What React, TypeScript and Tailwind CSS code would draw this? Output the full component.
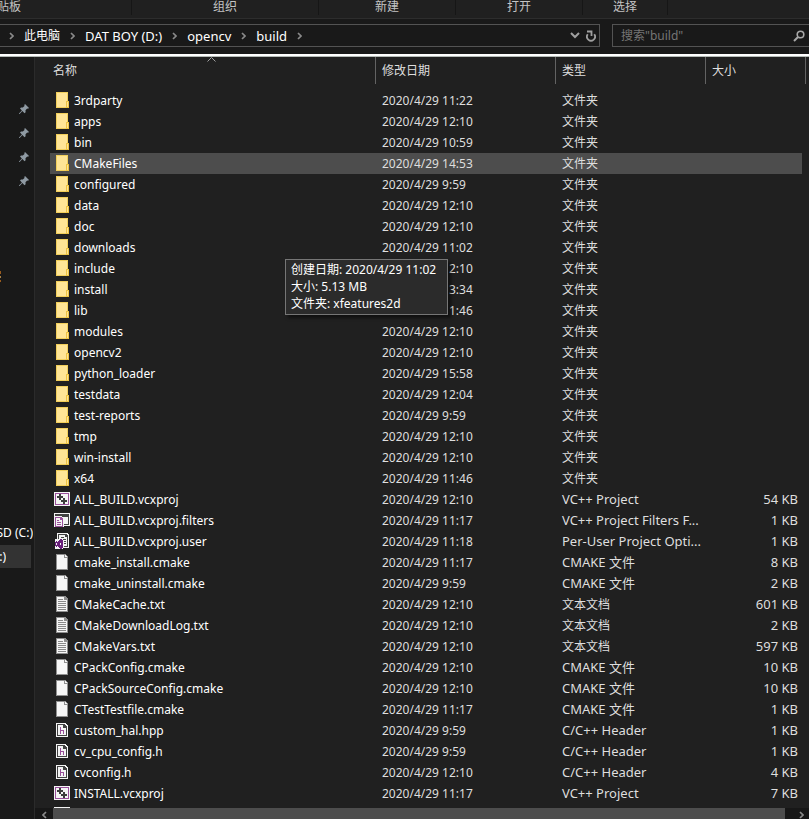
import type { ReactNode } from "react";

type IconKind = "folder" | "project" | "filters" | "user" | "blank" | "text" | "header";
type Row = { name: string; date: string; type: string; size?: string; icon: IconKind };

const folder = (name: string, time: string): Row => ({ name, date: `2020/4/29 ${time}`, type: "文件夹", icon: "folder" });
const file = (name: string, time: string, type: string, size: string, icon: IconKind): Row => ({
  name,
  date: `2020/4/29 ${time}`,
  type,
  size,
  icon,
});

const rows: Row[] = [
  folder("3rdparty", "11:22"),
  folder("apps", "12:10"),
  folder("bin", "10:59"),
  folder("CMakeFiles", "14:53"),
  folder("configured", "9:59"),
  folder("data", "12:10"),
  folder("doc", "12:10"),
  folder("downloads", "11:02"),
  folder("include", "12:10"),
  folder("install", "13:34"),
  folder("lib", "11:46"),
  folder("modules", "12:10"),
  folder("opencv2", "12:10"),
  folder("python_loader", "15:58"),
  folder("testdata", "12:04"),
  folder("test-reports", "9:59"),
  folder("tmp", "12:10"),
  folder("win-install", "12:10"),
  folder("x64", "11:46"),
  file("ALL_BUILD.vcxproj", "12:10", "VC++ Project", "54 KB", "project"),
  file("ALL_BUILD.vcxproj.filters", "11:17", "VC++ Project Filters F...", "1 KB", "filters"),
  file("ALL_BUILD.vcxproj.user", "11:18", "Per-User Project Opti...", "1 KB", "user"),
  file("cmake_install.cmake", "11:17", "CMAKE 文件", "8 KB", "blank"),
  file("cmake_uninstall.cmake", "9:59", "CMAKE 文件", "2 KB", "blank"),
  file("CMakeCache.txt", "12:10", "文本文档", "601 KB", "text"),
  file("CMakeDownloadLog.txt", "12:10", "文本文档", "2 KB", "text"),
  file("CMakeVars.txt", "12:10", "文本文档", "597 KB", "text"),
  file("CPackConfig.cmake", "12:10", "CMAKE 文件", "10 KB", "blank"),
  file("CPackSourceConfig.cmake", "12:10", "CMAKE 文件", "10 KB", "blank"),
  file("CTestTestfile.cmake", "11:17", "CMAKE 文件", "1 KB", "blank"),
  file("custom_hal.hpp", "9:59", "C/C++ Header", "1 KB", "header"),
  file("cv_cpu_config.h", "9:59", "C/C++ Header", "1 KB", "header"),
  file("cvconfig.h", "12:10", "C/C++ Header", "4 KB", "header"),
  file("INSTALL.vcxproj", "11:17", "VC++ Project", "7 KB", "project"),
];

const shapes: Record<IconKind, ReactNode> = {
  folder: (
    <>
      <path d="M2 0h12v16H2z" fill="#f2cf5b" />
      <path d="M3 1h10v14H3z" fill="#ffe596" />
      <path d="M12 9h3v7h-3z" fill="#edc343" />
      <path d="M13 10h1v5h-1z" fill="#ffe596" />
    </>
  ),
  project: (
    <>
      <path d="M0 1h16v14H0z" fill="#f4f4f4" />
      <path d="M1 2h14v12H1z" fill="#98509a" />
      <path d="M2 3h12v10H2z" fill="#f4f4f4" />
      <path d="M5 3h2v2h2v2H7v2H5V7H3V5h2zM9 7h2v2h2v2h-2v2H9v-2H7V9h2z" fill="#3c3c3c" />
    </>
  ),
  filters: (
    <>
      <path d="M0 1h16v13H0z" fill="#f4f4f4" />
      <path d="M1 2h14v11H1z" fill="#424242" />
      <path d="M2 5h12v7H2z" fill="#f4f4f4" />
      <path d="M0 4h8l2 3v8H0z" fill="#f4f4f4" />
      <path d="M1 5h6l2 2v8H1z" fill="#98509a" />
      <path d="M2 6h4v2h2v6H2z" fill="#f4f4f4" />
      <path d="M3 8h2v1H3zM3 10h4v1H3zM3 12h4v1H3z" fill="#98509a" />
    </>
  ),
  user: (
    <>
      <path d="M3 0h10l2 2v13H3z" fill="#f4f4f4" />
      <path d="M4 1h8l2 2v11H4z" fill="#424242" />
      <path d="M5 2h6v2h2v9H5z" fill="#f4f4f4" />
      <path d="M7 4h3v1H7zM7 6h1v1H7zM9 6h3v1H9zM7 8h1v1H7zM9 8h3v1H9zM9 10h3v1H9z" fill="#424242" />
      <path d="M1 6h7l2 1v8l-2 1H1z" fill="#f4f4f4" />
      <path d="M6 6l3 1v8l-3 1-3-3-1 1-1-1V9l1-1 1 1zM7 9l-2 2 2 2zM2 10v2l1-1z" fill="#68217a" fillRule="evenodd" />
    </>
  ),
  blank: (
    <>
      <path d="M2 0h9l3 3v13H2z" fill="#8f8f8f" />
      <path d="M3 1h7v3h3v11H3z" fill="#f6f6f6" />
      <path d="M11 1l2 2h-2z" fill="#f6f6f6" />
    </>
  ),
  text: (
    <>
      <path d="M2 0h9l3 3v13H2z" fill="#8f8f8f" />
      <path d="M3 1h7v3h3v11H3z" fill="#f6f6f6" />
      <path d="M4 3h5v1H4zM4 5h8v1H4zM4 7h8v1H4zM4 9h8v1H4zM4 11h8v1H4zM4 13h8v1H4z" fill="#8a8a8a" />
    </>
  ),
  header: (
    <>
      <path d="M2 1h9l3 3v11H2z" fill="#f4f4f4" />
      <path d="M3 2h7l3 3v9H3z" fill="#424242" />
      <path d="M4 3h5v3h3v7H4z" fill="#f4f4f4" />
      <path d="M6 5h1v3h3v4H9V9H7v3H6z" fill="#98509a" />
    </>
  ),
};

function FileIcon({ kind }: { kind: IconKind }) {
  return (
    <svg className="block size-4 shrink-0" viewBox="0 0 16 16" shapeRendering="crispEdges" aria-hidden="true">
      {shapes[kind]}
    </svg>
  );
}

function Pin() {
  return (
    <svg className="block size-[10px]" viewBox="0 0 10 10" aria-hidden="true">
      <path d="M6 0l4 4-1 .8-.8-.2-1.700 1.700.1 1.900-1.100 1L3.400 7.100.6 10H0v-.6l2.900-2.800L1 4.600l1-1.100 1.800.1 1.700-1.700L5.300 1z" fill="#8f9aa3" />
    </svg>
  );
}

function Chevron({ className }: { className: string }) {
  return (
    <svg className={className} viewBox="0 0 5 8" fill="none" stroke="currentColor" strokeWidth="1.700" aria-hidden="true">
      <path d="M1 1l3 3-3 3" />
    </svg>
  );
}

const crumbs = [
  { label: "此电脑", size: "text-[12px]" },
  { label: "DAT BOY (D:)", size: "text-[13px]" },
  { label: "opencv", size: "text-[13px]" },
  { label: "build", size: "text-[13px]" },
];

const isLatin = (s: string) => /^[A-Z]/.test(s);

export default function App() {
  return (
    <div className="flex h-screen flex-col overflow-hidden bg-[#191919] font-['Noto_Sans','Noto_Sans_CJK_SC',sans-serif] text-xs text-white">
      <div className="flex h-[19px] shrink-0 border-b border-[#2d2d2d] bg-[#202020] leading-[14px] text-[#c4c4c4]">
        <div className="flex h-[15px] w-[132px] border-r border-[#161616]">
          <span className="flex w-[21px] justify-end overflow-hidden whitespace-nowrap">剪贴板</span>
        </div>
        <div className="h-[15px] w-[187px] border-r border-[#161616] text-center">组织</div>
        <div className="h-[15px] w-[137px] border-r border-[#161616] text-center">新建</div>
        <div className="h-[15px] w-[127px] border-r border-[#161616] text-center">打开</div>
        <div className="h-[15px] w-[85px] border-r border-[#161616] text-center">选择</div>
      </div>

      <div className="flex h-[35px] shrink-0 items-center gap-3 pb-0.5">
        <nav className="flex h-[23px] flex-1 items-center border border-l-0 border-[#535353]" aria-label="地址">
          <Chevron className="ml-[9px] h-2 w-[5px] text-[#8a8a8a]" />
          {crumbs.map((c) => (
            <div key={c.label} className="flex items-center">
              <a href="#" className={`px-[10px] leading-4 ${c.size}`}>{c.label}</a>
              <Chevron className="h-2 w-[5px] text-[#8a8a8a]" />
            </div>
          ))}
          <button type="button" className="ml-auto flex h-full w-4 items-center justify-center" aria-label="以前的位置">
            <svg className="h-[7px] w-[10px]" viewBox="0 0 10 7" fill="none" stroke="#a0a0a0" strokeWidth="2" aria-hidden="true">
              <path d="M1 1l4 4 4-4" />
            </svg>
          </button>
          <button type="button" className="flex h-full w-4 items-center justify-center" aria-label="刷新">
            <svg className="h-3 w-[10px]" viewBox="0 0 10 12" fill="none" stroke="#a0a0a0" strokeWidth="1.800" aria-hidden="true">
              <path d="M1.800 4.200A4 4 0 1 0 8.200 4.200M1 1.500h4.500v4.500" />
            </svg>
          </button>
        </nav>
        <div className="flex h-[23px] w-[197px] items-center border border-r-0 border-[#535353]">
          <input
            type="search"
            aria-label="搜索"
            placeholder={'搜索"build"'}
            className="h-full min-w-0 flex-1 bg-transparent pl-[8px] text-[12px] outline-none placeholder:text-[#757575]"
          />
          <svg className="mr-1 h-3 w-[12px]" viewBox="0 0 12 12" fill="none" stroke="#a8a8a8" aria-hidden="true">
            <circle cx="7.500" cy="4.500" r="3.300" strokeWidth="1.600" />
            <path d="M5 7L1 11" strokeWidth="2" />
          </svg>
        </div>
      </div>

      <div className="h-[3px] shrink-0 border-b border-[#b4bab6] bg-white" />

      <div className="flex min-h-0 flex-1">
        <aside className="flex w-[35px] shrink-0 flex-col border-r border-[#2b2b2b]">
          <div className="mt-[47px] flex flex-col gap-[14px] pl-[19px]">
            <Pin />
            <Pin />
            <Pin />
            <Pin />
          </div>
          <div className="mt-[85px] flex w-px flex-col gap-0.5" aria-hidden="true">
            <span className="h-[3px] bg-[#9a5b1c]" />
            <span className="h-0.5 bg-[#a9824a]" />
            <span className="h-0.5 bg-[#9a5b1c]" />
          </div>
          <div className="mt-[239px] flex h-6 w-[33px] items-center justify-end overflow-hidden whitespace-nowrap">SSD (C:)</div>
          <div className="h-[23px] w-[31px] bg-[#333333]">
            <div className="flex h-[23px] w-[6px] items-center justify-end overflow-hidden whitespace-nowrap">(D:)</div>
          </div>
        </aside>

        <main className="flex min-w-0 flex-1 flex-col bg-[#202020]">
          <div className="relative min-h-0 flex-1 overflow-hidden pr-[3px] pl-[15px]">
            <table className="w-full table-fixed border-collapse text-[#dedede]">
              <colgroup>
                <col />
                <col className="w-[180px]" />
                <col className="w-[150px]" />
                <col className="w-[97px]" />
                <col className="w-[4px]" />
              </colgroup>
              <thead>
                <tr className="h-[33px] text-left align-top">
                  <th className="p-0 font-normal">
                    <div className="flex h-[27px] items-center pl-[3px]">
                      <span>名称</span>
                      <svg className="mx-auto h-[5px] w-[9px] self-start" viewBox="0 0 9 5" fill="none" stroke="#a0a0a0" aria-hidden="true">
                        <path d="M.5 4.500l4-4 4 4" />
                      </svg>
                      <span className="w-[30px]" />
                    </div>
                  </th>
                  <th className="p-0 font-normal">
                    <div className="flex h-[27px] items-center border-l border-[#636363] pl-[6px]">修改日期</div>
                  </th>
                  <th className="p-0 font-normal">
                    <div className="flex h-[27px] items-center border-l border-[#636363] pl-[6px]">类型</div>
                  </th>
                  <th className="p-0 font-normal" colSpan={2}>
                    <div className="flex h-[27px] items-center border-x border-[#636363] pl-[6px]">大小</div>
                  </th>
                </tr>
              </thead>
              <tbody>
                {rows.map((r) => (
                  <tr
                    key={r.name}
                    className={r.name === "CMakeFiles" ? "h-[21px] *:not-last:bg-[#4d4d4d]" : "h-[21px]"}
                  >
                    <td className="p-0">
                      <div className="flex h-[21px] items-start gap-1 pt-0.5 pl-1 whitespace-nowrap text-white">
                        <FileIcon kind={r.icon} />
                        <span className="leading-[17px]">{r.name}</span>
                      </div>
                    </td>
                    <td className="p-0 pl-[7px] leading-[21px] whitespace-nowrap">{r.date}</td>
                    <td
                      className={
                        isLatin(r.type)
                          ? "p-0 pl-[7px] text-[13px] leading-[21px] whitespace-nowrap"
                          : "p-0 pl-[7px] leading-[21px] whitespace-nowrap"
                      }
                    >
                      {r.type}
                    </td>
                    <td className="p-0 pr-1 text-right text-[13px] leading-[21px] whitespace-nowrap">{r.size}</td>
                    <td className="p-0" />
                  </tr>
                ))}
                <tr aria-hidden="true">
                  <td className="p-0 pt-0.5 pl-1" colSpan={5}>
                    <FileIcon kind="filters" />
                  </td>
                </tr>
              </tbody>
            </table>

            <div
              role="tooltip"
              className="absolute top-[202px] left-[250px] w-[163px] border border-[#767676] bg-[#2b2b2b] pt-px pb-0.5 pl-[5px] leading-[17px] whitespace-nowrap shadow-[3px_3px_3px_rgba(0,0,0,0.5)]"
            >
              <p>创建日期: 2020/4/29 11:02</p>
              <p>大小: 5.13 MB</p>
              <p>文件夹: xfeatures2d</p>
            </div>
          </div>
          <div className="flex h-[11px] shrink-0 bg-[#171717]">
            <button type="button" className="flex w-[18px] items-end justify-center" aria-label="向左滚动">
              <Chevron className="h-2 w-[5px] rotate-180 text-[#8a8a8a]" />
            </button>
            <div className="flex-1 bg-[#4d4d4d]" />
            <button type="button" className="flex w-6 items-end justify-center" aria-label="向右滚动">
              <Chevron className="ml-2 h-2 w-[5px] text-[#8a8a8a]" />
            </button>
          </div>
        </main>
      </div>
    </div>
  );
}
